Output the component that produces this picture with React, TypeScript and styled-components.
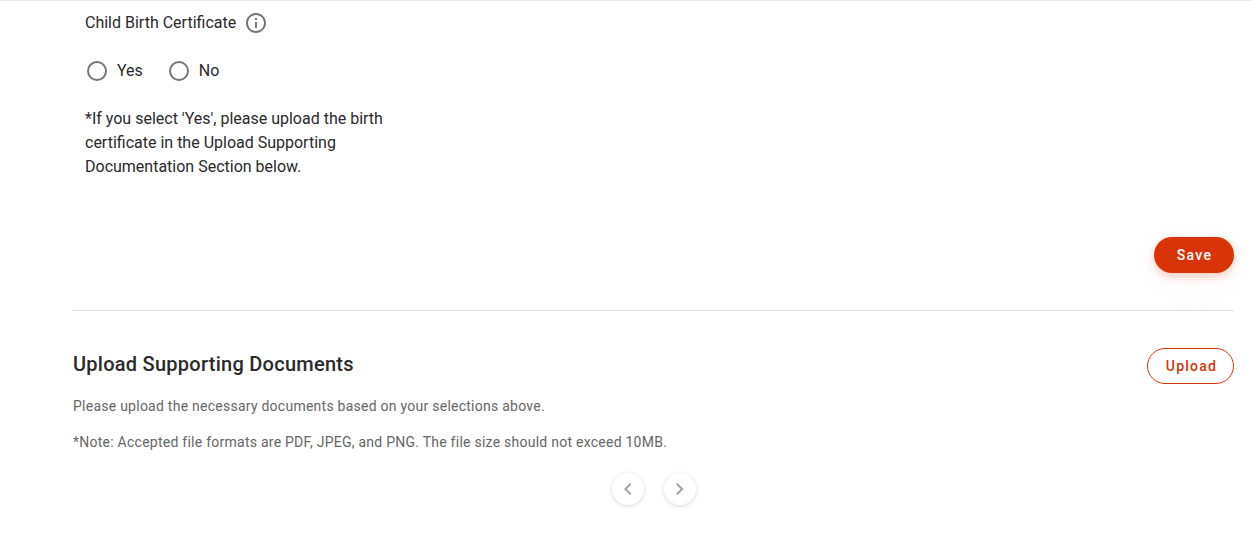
import styled, { createGlobalStyle } from 'styled-components';

const GlobalStyle = createGlobalStyle`
  html, body {
    margin: 0;
    padding: 0;
    background: #fff;
    font-family: Roboto, 'Liberation Sans', sans-serif;
  }
`;

const Page = styled.div`
  width: 1252px;
  height: 539px;
  box-sizing: border-box;
  overflow: hidden;
  border-top: 1px solid #e8e8e8;
  padding: 9px 18px 0 73px;
`;

const FormBlock = styled.div`
  display: flex;
  flex-direction: column;
  padding-left: 12px;
`;

const LabelRow = styled.div`
  display: flex;
  align-items: center;
  gap: 8px;
  height: 24px;
  font-size: 16px;
  color: #2a2a2a;
`;

const InfoIcon = styled.svg`
  width: 24px;
  height: 24px;
  margin-top: 1px;
  color: #757575;
`;

const RadioRow = styled.div`
  display: flex;
  align-items: center;
  gap: 26px;
  margin-top: 25px;
  padding-left: 2px;
`;

const RadioOption = styled.label`
  display: flex;
  align-items: center;
  gap: 10px;
  font-size: 16px;
  line-height: 24px;
  color: #2a2a2a;
`;

const RadioCircle = styled.span`
  width: 20px;
  height: 20px;
  box-sizing: border-box;
  border: 2px solid #757575;
  border-radius: 50%;
`;

const Note = styled.p`
  width: 310px;
  margin: 24px 0 0;
  font-size: 16px;
  line-height: 24px;
  color: #2a2a2a;
`;

const SaveRow = styled.div`
  display: flex;
  justify-content: flex-end;
  margin-top: 58px;
`;

const SaveButton = styled.button`
  width: 80px;
  height: 36px;
  padding: 0 0 0 1px;
  border: none;
  border-radius: 18px;
  background: #d93408;
  color: #fff;
  font-family: inherit;
  font-size: 14px;
  font-weight: 500;
  letter-spacing: 1.25px;
  box-shadow: 0 3px 8px rgba(217, 52, 8, 0.25), 0 8px 40px rgba(217, 52, 8, 0.04);
`;

const Divider = styled.hr`
  height: 1px;
  margin: 37px 0 0;
  border: none;
  background: #e0e0e0;
`;

const UploadHeader = styled.div`
  display: flex;
  align-items: center;
  justify-content: space-between;
  margin-top: 37px;
`;

const Heading = styled.h2`
  margin: 0;
  padding-bottom: 4px;
  font-size: 20px;
  font-weight: 500;
  line-height: 32px;
  letter-spacing: 0.26px;
  color: #2a2a2a;
`;

const UploadButton = styled.button`
  width: 87px;
  height: 36px;
  box-sizing: border-box;
  padding: 0 0 0 2px;
  border: 1px solid #d93408;
  border-radius: 18px;
  background: #fff;
  color: #d93408;
  font-family: inherit;
  font-size: 14px;
  font-weight: 500;
  letter-spacing: 1.25px;
`;

const HelpText = styled.p<{ $top: number }>`
  margin: ${({ $top }) => $top}px 0 0;
  font-size: 14px;
  line-height: 20px;
  letter-spacing: 0.25px;
  color: #666;
`;

const Pager = styled.div`
  display: flex;
  justify-content: center;
  gap: 20px;
  margin-top: 21px;
`;

const PagerButton = styled.button`
  display: flex;
  align-items: center;
  justify-content: center;
  width: 32px;
  height: 32px;
  padding: 0;
  border: none;
  border-radius: 50%;
  background: #fff;
  color: #a3a3a3;
  box-shadow: 0 1px 4px rgba(0, 0, 0, 0.16);
`;

function Chevron({ direction }: { direction: 'left' | 'right' }) {
  return (
    <svg width='24' height='24' viewBox='0 0 24 24' fill='currentColor'>
      <path
        d={
          direction === 'left'
            ? 'M15.41 7.41 14 6l-6 6 6 6 1.41-1.41L10.83 12z'
            : 'M8.09 16.59 9.5 18l6-6-6-6-1.41 1.41L12.67 12z'
        }
      />
    </svg>
  );
}

function App() {
  return (
    <>
      <GlobalStyle />
      <Page>
        <FormBlock>
          <LabelRow>
            Child Birth Certificate
            <InfoIcon viewBox='0 0 24 24' fill='currentColor'>
              <path d='M11 7h2v2h-2zm0 4h2v6h-2zm1-9C6.48 2 2 6.48 2 12s4.48 10 10 10 10-4.48 10-10S17.52 2 12 2zm0 18c-4.41 0-8-3.59-8-8s3.59-8 8-8 8 3.59 8 8-3.59 8-8 8z' />
            </InfoIcon>
          </LabelRow>
          <RadioRow>
            <RadioOption>
              <RadioCircle />
              Yes
            </RadioOption>
            <RadioOption>
              <RadioCircle />
              No
            </RadioOption>
          </RadioRow>
          <Note>
            *If you select 'Yes', please upload the birth certificate in the Upload Supporting Documentation Section
            below.
          </Note>
        </FormBlock>
        <SaveRow>
          <SaveButton>Save</SaveButton>
        </SaveRow>
        <Divider />
        <UploadHeader>
          <Heading>Upload Supporting Documents</Heading>
          <UploadButton>Upload</UploadButton>
        </UploadHeader>
        <HelpText $top={12}>Please upload the necessary documents based on your selections above.</HelpText>
        <HelpText $top={16}>*Note: Accepted file formats are PDF, JPEG, and PNG. The file size should not exceed 10MB.</HelpText>
        <Pager>
          <PagerButton>
            <Chevron direction='left' />
          </PagerButton>
          <PagerButton>
            <Chevron direction='right' />
          </PagerButton>
        </Pager>
      </Page>
    </>
  );
}

export default App;
